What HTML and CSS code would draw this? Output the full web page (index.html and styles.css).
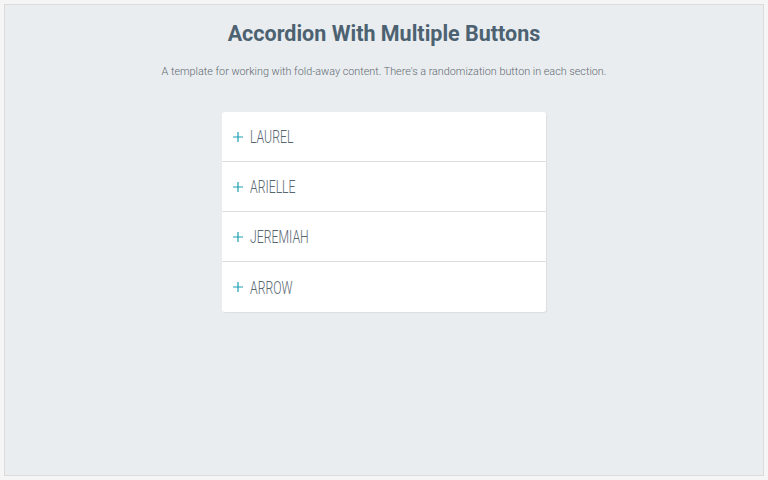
FILE: index.html
```html
<!DOCTYPE html>
<html>
<head>
<meta charset="utf-8">
<link rel="stylesheet" href="styles.css">
</head>
<body>
<div class="frame">
  <h1 class="title">Accordion With Multiple Buttons</h1>
  <p class="subtitle">A template for working with fold-away content. There's a randomization button in each section.</p>
  <div class="accordion">
    <div class="item"><svg class="plus" viewBox="0 0 10 10"><path d="M5 0V10M0 5H10"/></svg><span class="label">LAUREL</span></div>
    <div class="item"><svg class="plus" viewBox="0 0 10 10"><path d="M5 0V10M0 5H10"/></svg><span class="label">ARIELLE</span></div>
    <div class="item"><svg class="plus" viewBox="0 0 10 10"><path d="M5 0V10M0 5H10"/></svg><span class="label">JEREMIAH</span></div>
    <div class="item"><svg class="plus" viewBox="0 0 10 10"><path d="M5 0V10M0 5H10"/></svg><span class="label">ARROW</span></div>
  </div>
</div>
</body>
</html>
```
FILE: styles.css
```css
html, body {
  margin: 0;
  padding: 0;
  background: #f5f5f5;
}
body {
  padding: 4px;
  height: 480px;
  box-sizing: border-box;
}
.frame {
  height: 472px;
  box-sizing: border-box;
  border: 1px solid #dcdcdc;
  background: #e9edf0;
  display: flex;
  flex-direction: column;
  align-items: center;
  font-family: Roboto, "Liberation Sans", sans-serif;
}
.title {
  margin: 16px 0 0;
  font-size: 21.5px;
  font-weight: 700;
  line-height: 26px;
  color: #4d6271;
}
.subtitle {
  margin: 18px 0 0;
  font-size: 10.8px;
  font-weight: 300;
  line-height: 14px;
  color: #626a70;
}
.accordion {
  margin-top: 33px;
  width: 324px;
  background: #fff;
  border-radius: 3px;
  box-shadow: 1px 1px 1px rgba(0,0,0,0.06);
}
.item {
  height: 50px;
  box-sizing: border-box;
  display: flex;
  align-items: center;
  padding-left: 11px;
  border-bottom: 1px solid #dcdfe1;
}
.item:last-child {
  border-bottom: none;
}
.plus {
  width: 10px;
  height: 10px;
  margin-right: 7px;
  stroke: #1c9fb2;
  stroke-width: 1.2;
  fill: none;
}
.label {
  font-family: Roboto, "Liberation Sans", sans-serif;
  font-weight: 300;
  font-size: 18px;
  color: #56656f;
  display: inline-block;
  transform: scaleX(0.68);
  transform-origin: left center;
}
```
